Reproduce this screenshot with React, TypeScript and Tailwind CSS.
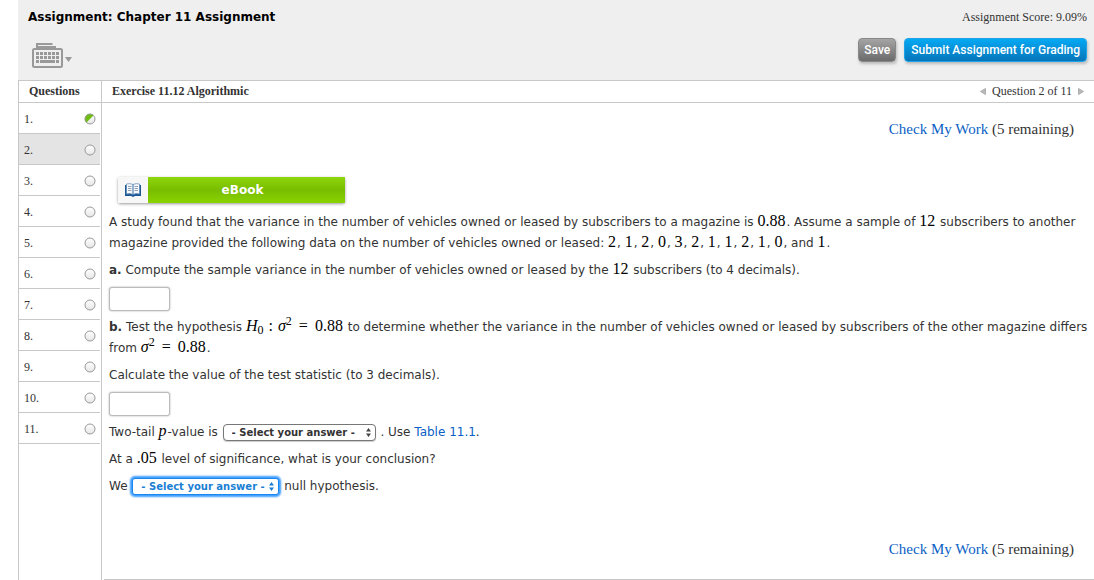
import React from "react";

const questions = [1, 2, 3, 4, 5, 6, 7, 8, 9, 10, 11];
const currentQuestion = 2;

const Num: React.FC<{ children: React.ReactNode }> = ({ children }) => (
    <span className="mr-px font-['Liberation_Serif',serif] text-[16px] leading-none text-black">{children}</span>
)

const SigmaSquared: React.FC = () => (
    <>
        <i>σ</i>
        <sup className="text-[12px] leading-none">2</sup>
    </>
)

const Equals: React.FC = () => <span className="mx-[3px]"> = </span>

const KeyboardIcon: React.FC = () => (
    <svg width="31" height="26" viewBox="0 0 31 26" fill="none" aria-hidden="true">
        <path d="M20.5 2H5V5H23V7" stroke="#999" strokeWidth="2" />
        <rect x="1" y="7" width="29" height="18" rx="1.5" stroke="#999" strokeWidth="2" />
        <path d="M4 11.5H27M4 15.5H27" stroke="#999" strokeWidth="3" strokeDasharray="3 1" />
        <path d="M4 19.5H7M8 19.5H23M24 19.5H27" stroke="#999" strokeWidth="3" />
    </svg>
)

const BookIcon: React.FC = () => (
    <svg width="16" height="14" viewBox="0 0 16 14" aria-hidden="true">
        <path d="M0 2H16V13H10L8 14L6 13H0Z" fill="#1c5796" />
        <path d="M1.5 1Q5 0 8 1.5Q11 0 14.5 1V11Q11 10 8 11.5Q5 10 1.5 11Z" fill="#f5f8fc" stroke="#5f86b2" strokeWidth="0.7" />
        <path d="M8 1.5V11.5" stroke="#3d6ca3" />
        <path d="M3 3.5H6.5M3 5.5H6.5M3 7.5H6.5M9.5 3.5H13M9.5 5.5H13M9.5 7.5H13" stroke="#8896a8" strokeWidth="0.9" />
    </svg>
)

const StatusIcon: React.FC<{ done: boolean }> = ({ done }) => (
    <svg width="12" height="12" viewBox="0 0 12 12" aria-hidden="true">
        <defs>
            <linearGradient id="dot" x1="0" y1="0" x2="0" y2="1">
                <stop offset="0" stopColor="#fff" />
                <stop offset="1" stopColor="#e6e6e6" />
            </linearGradient>
        </defs>
        <circle cx="6" cy="6" r="5" fill="url(#dot)" />
        {done && <path d="M2.3 9.7A5 5 0 0 1 9.7 2.3Z" fill="#6fbf12" />}
        <circle cx="6" cy="6" r="5" fill="none" stroke="#999" />
    </svg>
)

const AnswerSelect: React.FC<{ label: string; active?: boolean }> = ({ label, active }) => (
    <span className="relative mx-px inline-block h-[17px] align-middle">
        <select
            aria-label={label}
            className={
                active
                    ? "block h-[17px] w-[147px] appearance-none rounded-[3px] border border-[#1a86f0] bg-white pl-2 font-['DejaVu_Sans',sans-serif] text-[10px] leading-[15px] font-bold text-[#1a7fd4] shadow-[0_0_2px_2px_#3d9bff] outline-none"
                    : "block h-[17px] w-[153px] appearance-none rounded-[4px] border border-[#777] bg-white pl-2 font-['DejaVu_Sans',sans-serif] text-[10px] leading-[15px] font-bold text-[#333] shadow-[0_1px_1px_#ccc]"
            }
        >
            <option>- Select your answer -</option>
        </select>
        <svg
            className={active ? "pointer-events-none absolute top-1 right-1 text-[#1a7fd4]" : "pointer-events-none absolute top-1 right-1 text-[#444]"}
            width="7"
            height="9"
            viewBox="0 0 7 9"
            aria-hidden="true"
        >
            <path d="M3.5 0L6 3.5H1ZM3.5 9L6 5.5H1Z" fill="currentColor" />
        </svg>
    </span>
)

const AnswerInput: React.FC<{ label: string }> = ({ label }) => (
    <input
        type="text"
        aria-label={label}
        className="block h-6 w-[61px] rounded-[3px] border border-[#bbb] bg-white px-1 shadow-[0_0_2px_#aaa]"
    />
)

const CheckMyWork: React.FC = () => (
    <div className="pr-5 text-right font-['Liberation_Serif',serif] text-[15px] leading-5">
        <a href="#check" className="text-[#0b5fc4]">Check My Work</a> (5 remaining)
    </div>
)

const Header: React.FC = () => (
    <header className="flex h-20 justify-between bg-[#efefef] pr-[7px] pl-[10px]">
        <div>
            <h1 className="pt-2 font-['DejaVu_Sans',sans-serif] text-[12px] leading-[18px] font-bold text-black">
                Assignment: Chapter 11 Assignment
            </h1>
            <button type="button" aria-label="Keyboard" className="mt-4 ml-1 flex items-center gap-[2px]">
                <KeyboardIcon />
                <svg width="7" height="5" viewBox="0 0 7 5" className="mt-2" aria-hidden="true">
                    <path d="M0 0H7L3.5 5Z" fill="#999" />
                </svg>
            </button>
        </div>
        <div className="flex flex-col items-end">
            <div className="pt-2 text-[12px] leading-[18px]">Assignment Score: 9.09%</div>
            <div className="mt-3 flex gap-2 font-['Roboto',sans-serif] text-[12px] font-medium text-white">
                <button type="button" className="h-6 rounded-[4px] border border-[#888] bg-linear-to-b from-[#a5a5a5] to-[#6b6b6b] px-[5px] shadow-[1px_2px_3px_#bbb]">
                    Save
                </button>
                <button type="button" className="h-6 rounded-[4px] border border-[#1fa3e8] bg-linear-to-b from-[#06a9f4] to-[#0675b9] px-[6px] shadow-[1px_2px_3px_#bbb]">
                    Submit Assignment for Grading
                </button>
            </div>
        </div>
    </header>
)

const QuestionList: React.FC = () => (
    <nav className="w-[84px] shrink-0 border-x border-[#c8c8c8] text-[12px]">
        <h2 className="h-[22px] border-b border-[#c8c8c8] pl-[10px] leading-[21px] font-bold">Questions</h2>
        <ul className="pr-px">
            {questions.map((number) => (
                <li
                    key={number}
                    className={number === currentQuestion ? "border-b border-[#c8c8c8] bg-[#e4e4e4]" : "border-b border-[#c8c8c8]"}
                >
                    <a href={`#question-${number}`} className="flex h-[30px] items-center justify-between pt-px pr-1 pl-[5px]">
                        <span>{number}.</span>
                        <StatusIcon done={number === 1} />
                    </a>
                </li>
            ))}
        </ul>
    </nav>
)

const Exercise: React.FC = () => (
    <main className="flex min-w-0 flex-1 flex-col">
        <div className="flex h-[22px] justify-between border-b border-[#c8c8c8] px-[10px] text-[12px] leading-[21px]">
            <h2 className="font-bold">Exercise 11.12 Algorithmic</h2>
            <div className="flex items-center gap-[6px]">
                <button type="button" aria-label="Previous question">
                    <svg width="6" height="7" viewBox="0 0 6 7"><path d="M5.5 0.5V6.5L0.5 3.5Z" fill="#bbb" stroke="#999" strokeWidth="0.7" /></svg>
                </button>
                <span>Question 2 of 11</span>
                <button type="button" aria-label="Next question">
                    <svg width="6" height="7" viewBox="0 0 6 7"><path d="M0.5 0.5V6.5L5.5 3.5Z" fill="#bbb" stroke="#999" strokeWidth="0.7" /></svg>
                </button>
            </div>
        </div>
        <div className="ml-[2px] border-b border-[#c8c8c8] pt-4 pb-5">
            <CheckMyWork />
            <div className="flex flex-col gap-[6px] pt-[38px] pb-[42px] pl-[5px] font-['DejaVu_Sans',sans-serif] text-[12px] leading-[21px]">
                <button type="button" className="mb-[3px] ml-[9px] flex h-[26px] w-[227px] rounded-[2px] shadow-[0_1px_3px_#999]">
                    <span className="flex h-full w-[30px] items-center justify-center bg-[#f7f7f7]"><BookIcon /></span>
                    <span className="flex h-full flex-1 items-center justify-center bg-linear-to-b from-[#8ed60c] via-[#78bd00] to-[#8ad302] pr-2 text-[12px] font-bold text-white">
                        eBook
                    </span>
                </button>
                <p>
                    A study found that the variance in the number of vehicles owned or leased by subscribers to a magazine is <Num>0.88</Num>. Assume a sample of <Num>12</Num> subscribers to another
                    magazine provided the following data on the number of vehicles owned or leased: <Num>2</Num>, <Num>1</Num>, <Num>2</Num>, <Num>0</Num>, <Num>3</Num>, <Num>2</Num>, <Num>1</Num>, <Num>1</Num>, <Num>2</Num>, <Num>1</Num>, <Num>0</Num>, and <Num>1</Num>.
                </p>
                <p>
                    <b>a.</b> Compute the sample variance in the number of vehicles owned or leased by the <Num>12</Num> subscribers (to 4 decimals).
                </p>
                <AnswerInput label="Sample variance" />
                <p>
                    <b>b.</b> Test the hypothesis <Num><i>H</i><sub className="text-[12px] leading-none">0</sub><span className="mx-px"> : </span><SigmaSquared /><Equals />0.88</Num> to determine whether the variance in the number of vehicles owned or leased by subscribers of the other magazine differs
                    from <Num><SigmaSquared /><Equals />0.88</Num>.
                </p>
                <p>Calculate the value of the test statistic (to 3 decimals).</p>
                <AnswerInput label="Test statistic" />
                <p>
                    Two-tail <Num><i>p</i></Num>-value is <AnswerSelect label="p-value" /> . Use <a href="#table" className="text-[#0b5fc4]">Table 11.1</a>.
                </p>
                <p>At a <Num>.05</Num> level of significance, what is your conclusion?</p>
                <p>
                    We <AnswerSelect label="Conclusion" active /> null hypothesis.
                </p>
            </div>
            <CheckMyWork />
        </div>
    </main>
)

const App: React.FC = () => {
    return (
        <div className="min-h-screen bg-white pl-[18px] font-['Liberation_Serif',serif] text-[#333]">
            <Header />
            <div className="flex min-h-[calc(100vh-80px)] border-t border-[#c8c8c8]">
                <QuestionList />
                <Exercise />
            </div>
        </div>
    )
}

export default App
